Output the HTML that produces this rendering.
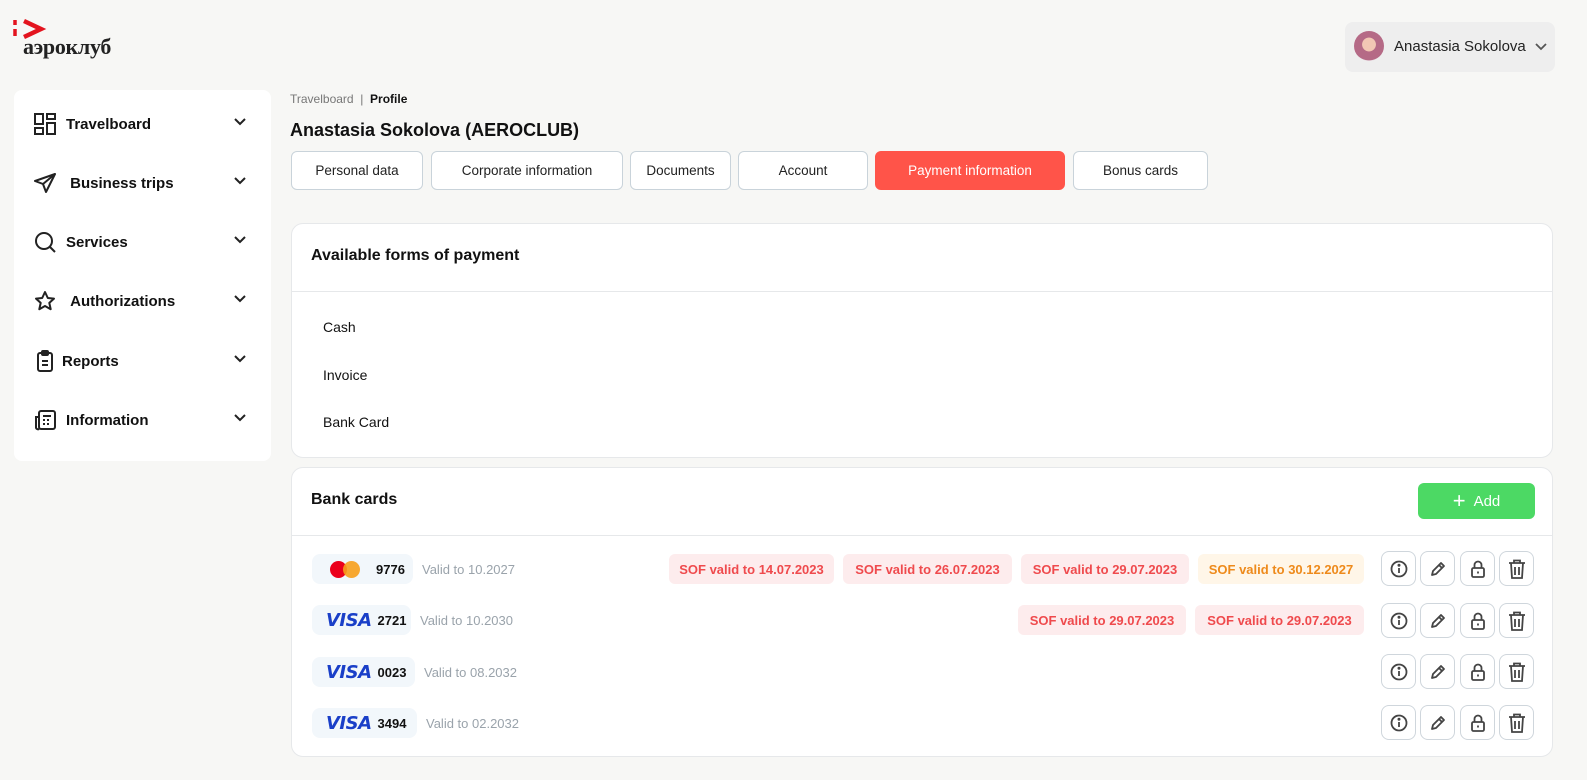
<!DOCTYPE html>
<html><head><meta charset="utf-8"><style>
*{box-sizing:border-box;margin:0;padding:0}
body{width:1587px;height:780px;background:#f7f7f5;font-family:"Liberation Sans",sans-serif;color:#111;position:relative;overflow:hidden}
.abs{position:absolute}
.side{left:14px;top:90px;width:257px;height:371px;background:#fff;border-radius:8px}
.nav{position:absolute;left:20px;width:220px;height:24px;display:flex;align-items:center;font-weight:bold;font-size:15px}
.nav svg.i{width:22px;height:22px;margin-right:10px}
.nav .ch{position:absolute;left:200px;top:6px}
.tab{position:absolute;top:151px;height:39px;border:1px solid #c9d3da;border-radius:6px;background:#fff;font-size:13.5px;display:flex;align-items:center;justify-content:center;color:#222}
.card{position:absolute;left:291px;width:1262px;background:#fff;border:1px solid #e6e8ea;border-radius:12px}
.pill{position:absolute;left:312px;height:30px;background:#f2f7fb;border-radius:8px;display:flex;align-items:center;font-size:13px;font-weight:bold}
.valid{position:absolute;font-size:13px;color:#9aa3ab}
.b{position:absolute;height:30px;border-radius:6px;font-size:13px;font-weight:bold;display:flex;align-items:center;justify-content:center;background:#fdeced;color:#ef4a4d}
.b.o{background:#fff6e8;color:#ee8a1b}
.ib{position:absolute;width:35px;height:35px;border:1px solid #cfd6dc;border-radius:8px;background:#fff;display:flex;align-items:center;justify-content:center}
.visa{font-style:italic;font-weight:900;color:#1a3fc8;font-size:18px;letter-spacing:-0.5px;margin:0 6px 0 14px;font-family:"DejaVu Sans","Liberation Sans",sans-serif}
</style></head><body>
<!-- logo -->
<svg class="abs" style="left:12px;top:18px" width="40" height="28" viewBox="0 0 40 28"><path d="M3 2v5M3 11v7" stroke="#e3141e" stroke-width="3.5"/><path d="M12 3l17 8-17 8" fill="none" stroke="#e3141e" stroke-width="4.5"/></svg>
<div class="abs" style="left:23px;top:34px;font-family:'Liberation Serif',serif;font-size:22px;font-weight:bold;color:#222;letter-spacing:-0.3px">аэроклуб</div>
<!-- user -->
<div class="abs" style="left:1345px;top:22px;width:210px;height:50px;background:#eeeeee;border-radius:8px"></div>
<div class="abs" style="left:1354px;top:31px;width:30px;height:30px;border-radius:50%;background:radial-gradient(circle at 50% 45%,#f2c7b4 0 30%,#b56a86 32% 70%,#e9dde2 72%)"></div>
<div class="abs" style="left:1394px;top:38px;font-size:15px;color:#222">Anastasia Sokolova</div>
<svg class="abs" style="left:1535px;top:43px" width="12" height="8"><path d="M1 1l5 5 5-5" fill="none" stroke="#555" stroke-width="1.8"/></svg>
<!-- sidebar -->
<div class="abs side">
<div class="nav" style="top:22px"><svg class="i" viewBox="0 0 22 22" fill="none" stroke="#222" stroke-width="2"><rect x="1" y="1" width="8" height="10"/><rect x="13" y="1" width="8" height="5"/><rect x="1" y="15" width="8" height="6"/><rect x="13" y="10" width="8" height="11"/></svg>Travelboard<svg class="ch" width="12" height="8"><path d="M1 1l5 5 5-5" fill="none" stroke="#222" stroke-width="2"/></svg></div>
<div class="nav" style="top:81px"><svg class="i" viewBox="0 0 22 22" fill="none" stroke="#222" stroke-width="2" stroke-linejoin="round"><path d="M21 2L1 9l8 3 3 8z"/><path d="M21 2L9 12"/></svg>&nbsp;Business trips<svg class="ch" width="12" height="8"><path d="M1 1l5 5 5-5" fill="none" stroke="#222" stroke-width="2"/></svg></div>
<div class="nav" style="top:140px"><svg class="i" viewBox="0 0 22 22" fill="none" stroke="#222" stroke-width="2"><circle cx="10" cy="10" r="8"/><path d="M16 16l5 5"/></svg>Services<svg class="ch" width="12" height="8"><path d="M1 1l5 5 5-5" fill="none" stroke="#222" stroke-width="2"/></svg></div>
<div class="nav" style="top:199px"><svg class="i" viewBox="0 0 22 22" fill="none" stroke="#222" stroke-width="2" stroke-linejoin="round"><path d="M11 2l2.8 6 6.2.6-4.7 4.3 1.4 6.3L11 16l-5.7 3.2 1.4-6.3L2 8.6 8.2 8z"/></svg>&nbsp;Authorizations<svg class="ch" width="12" height="8"><path d="M1 1l5 5 5-5" fill="none" stroke="#222" stroke-width="2"/></svg></div>
<div class="nav" style="top:259px"><svg class="i" style="margin-right:6px" viewBox="0 0 22 22" fill="none" stroke="#222" stroke-width="2"><rect x="4" y="3" width="14" height="18" rx="2"/><rect x="8" y="1" width="6" height="4" rx="1"/><path d="M8 11h6M8 15h6"/></svg>Reports<svg class="ch" width="12" height="8"><path d="M1 1l5 5 5-5" fill="none" stroke="#222" stroke-width="2"/></svg></div>
<div class="nav" style="top:318px"><svg class="i" viewBox="0 0 22 22" fill="none" stroke="#222" stroke-width="2"><rect x="5" y="2" width="16" height="18" rx="2"/><path d="M5 8H2v10a2 2 0 0 0 3 2M9 7h8M9 11h2M13 11h2M9 15h2M13 15h2"/></svg>Information<svg class="ch" width="12" height="8"><path d="M1 1l5 5 5-5" fill="none" stroke="#222" stroke-width="2"/></svg></div>
</div>
<!-- header -->
<div class="abs" style="left:290px;top:92px;font-size:12px;color:#777">Travelboard &nbsp;|&nbsp; <b style="color:#111">Profile</b></div>
<div class="abs" style="left:290px;top:120px;font-size:18px;font-weight:bold">Anastasia Sokolova (AEROCLUB)</div>
<div class="tab" style="left:291px;width:132px">Personal data</div>
<div class="tab" style="left:431px;width:192px">Corporate information</div>
<div class="tab" style="left:630px;width:101px">Documents</div>
<div class="tab" style="left:738px;width:130px">Account</div>
<div class="tab" style="left:875px;width:190px;background:#ff5449;border-color:#ff5449;color:#fff">Payment information</div>
<div class="tab" style="left:1073px;width:135px">Bonus cards</div>
<!-- card 1 -->
<div class="card" style="top:223px;height:235px">
<div style="height:68px;border-bottom:1px solid #e6e8ea;padding:23px 19px;font-size:16px;font-weight:bold">Available forms of payment</div>
<div class="abs" style="left:31px;top:95px;font-size:14px">Cash</div>
<div class="abs" style="left:31px;top:143px;font-size:14px">Invoice</div>
<div class="abs" style="left:31px;top:190px;font-size:14px">Bank Card</div>
</div>
<!-- card 2 -->
<div class="card" style="top:467px;height:290px">
<div style="height:68px;border-bottom:1px solid #e6e8ea;padding:23px 19px;font-size:16px;font-weight:bold">Bank cards</div>
<div class="abs" style="left:1126px;top:15px;width:117px;height:36px;background:#4cd964;border-radius:6px;color:#fff;font-size:15px;display:flex;align-items:center;justify-content:center"><span style="font-size:22px;margin-right:8px;font-weight:300">+</span>Add</div>
</div>
<!-- rows -->
<div class="pill" style="top:554px;width:101px"><span style="position:relative;width:34px;height:20px;margin:0 12px 0 18px"><span style="position:absolute;left:0;top:2px;width:17px;height:17px;border-radius:50%;background:#eb001b"></span><span style="position:absolute;left:13px;top:2px;width:17px;height:17px;border-radius:50%;background:#f79e1b;opacity:.9"></span></span>9776</div>
<div class="valid" style="left:422px;top:562px">Valid to 10.2027</div>
<div class="pill" style="top:605px;width:99px"><span class="visa">VISA</span>2721</div>
<div class="valid" style="left:420px;top:613px">Valid to 10.2030</div>
<div class="pill" style="top:657px;width:103px"><span class="visa">VISA</span>0023</div>
<div class="valid" style="left:424px;top:665px">Valid to 08.2032</div>
<div class="pill" style="top:708px;width:105px"><span class="visa">VISA</span>3494</div>
<div class="valid" style="left:426px;top:716px">Valid to 02.2032</div>
<div class="b" style="left:669px;top:554px;width:165px">SOF valid to 14.07.2023</div>
<div class="b" style="left:843px;top:554px;width:169px">SOF valid to 26.07.2023</div>
<div class="b" style="left:1021px;top:554px;width:168px">SOF valid to 29.07.2023</div>
<div class="b o" style="left:1198px;top:554px;width:166px">SOF valid to 30.12.2027</div>
<div class="b" style="left:1018px;top:605px;width:168px">SOF valid to 29.07.2023</div>
<div class="b" style="left:1195px;top:605px;width:169px">SOF valid to 29.07.2023</div>
<div id="ibs"></div>
<script>
var ys=[551,603,654,705],h='';
var ic=['<svg width="18" height="18" viewBox="0 0 18 18" fill="none" stroke="#444" stroke-width="1.8"><circle cx="9" cy="9" r="7.5"/><path d="M9 8v5"/><circle cx="9" cy="5.3" r=".6" fill="#444"/></svg>',
'<svg width="18" height="18" viewBox="0 0 18 18" fill="none" stroke="#444" stroke-width="1.8" stroke-linejoin="round"><path d="M3 15l1-4 8-8 3 3-8 8z M10 5l3 3"/></svg>',
'<svg width="16" height="18" viewBox="0 0 16 18" fill="none" stroke="#444" stroke-width="1.8"><rect x="2" y="8" width="12" height="9" rx="1.5"/><path d="M4.5 8V5a3.5 3.5 0 0 1 7 0v3M8 11.5v2"/></svg>',
'<svg width="18" height="20" viewBox="0 0 18 20" fill="none" stroke="#444" stroke-width="1.8"><path d="M1 4h16M6 4V1.5h6V4M3 4l1 15h10l1-15M7 8v8M11 8v8"/></svg>'];
var xs=[1381,1420,1460,1499];
ys.forEach(function(y){xs.forEach(function(x,i){h+='<div class="ib" style="left:'+x+'px;top:'+y+'px">'+ic[i]+'</div>';});});
document.getElementById('ibs').innerHTML=h;
</script>
</body></html>
